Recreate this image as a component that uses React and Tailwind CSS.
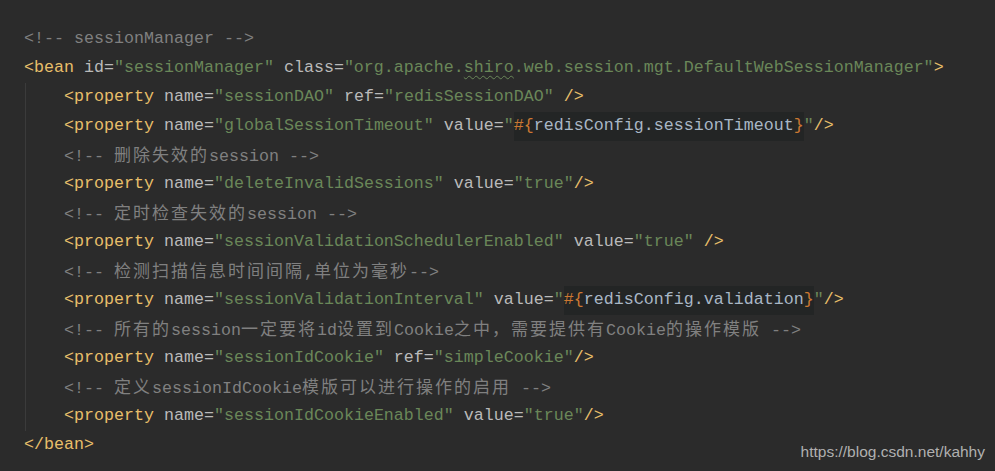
const C = {
  t: 'text-[#e8bf6a]',
  a: 'text-[#bababa]',
  v: 'text-[#6a8759]',
  c: 'text-[#808080]',
  o: 'text-[#cc7832]',
  i: 'text-[#a9b7c6]',
};

const prop = (name, attr, value) => [
  ['t', '<property'],
  ['a', ' name='],
  ['v', `"${name}"`],
  ['a', ` ${attr}=`],
  ['v', `"${value}"`],
];

const lines = [
  { lvl: 0, tk: [['c', '<!-- sessionManager -->']] },
  {
    lvl: 0,
    tk: [
      ['t', '<bean'],
      ['a', ' id='],
      ['v', '"sessionManager"'],
      ['a', ' class='],
      ['v', '"org.apache.'],
      ['u', 'shiro'],
      ['v', '.web.session.mgt.DefaultWebSessionManager"'],
      ['t', '>'],
    ],
  },
  { lvl: 1, tk: [...prop('sessionDAO', 'ref', 'redisSessionDAO'), ['t', ' />']] },
  {
    lvl: 1,
    tk: [
      ['t', '<property'],
      ['a', ' name='],
      ['v', '"globalSessionTimeout"'],
      ['a', ' value='],
      ['v', '"'],
      ['x', 'redisConfig.sessionTimeout'],
      ['v', '"'],
      ['t', '/>'],
    ],
  },
  { lvl: 1, tk: [['c', '<!-- 删除失效的session -->']] },
  { lvl: 1, tk: [...prop('deleteInvalidSessions', 'value', 'true'), ['t', '/>']] },
  { lvl: 1, tk: [['c', '<!-- 定时检查失效的session -->']] },
  { lvl: 1, tk: [...prop('sessionValidationSchedulerEnabled', 'value', 'true'), ['t', ' />']] },
  { lvl: 1, tk: [['c', '<!-- 检测扫描信息时间间隔,单位为毫秒-->']] },
  {
    lvl: 1,
    tk: [
      ['t', '<property'],
      ['a', ' name='],
      ['v', '"sessionValidationInterval"'],
      ['a', ' value='],
      ['v', '"'],
      ['x', 'redisConfig.validation'],
      ['v', '"'],
      ['t', '/>'],
    ],
  },
  { lvl: 1, tk: [['c', '<!-- 所有的session一定要将id设置到Cookie之中，需要提供有Cookie的操作模版 -->']] },
  { lvl: 1, tk: [...prop('sessionIdCookie', 'ref', 'simpleCookie'), ['t', '/>']] },
  { lvl: 1, tk: [['c', '<!-- 定义sessionIdCookie模版可以进行操作的启用 -->']] },
  { lvl: 1, tk: [...prop('sessionIdCookieEnabled', 'value', 'true'), ['t', '/>']] },
  { lvl: 0, tk: [['t', '</bean>']] },
];

// split CJK runs so they get their own (wider) metrics
function Text({ text }) {
  const parts = text.split(/([\u3000-\u9fff\uff00-\uffef]+)/);
  return parts.map((p, i) =>
    i % 2 === 1 ? (
      <span key={i} className="text-[17px] tracking-[2px]" style={{ fontFamily: '"Noto Sans CJK SC", sans-serif' }}>
        {p}
      </span>
    ) : (
      <span key={i}>{p}</span>
    )
  );
}

function Token({ type, text }) {
  if (type === 'x') {
    return (
      <span className="self-stretch flex items-center bg-[#232525]">
        <span className={C.o}>#{'{'}</span>
        <span className={C.i}>{text}</span>
        <span className={C.o}>{'}'}</span>
      </span>
    );
  }
  if (type === 'u') {
    return (
      <span className="text-[#6a8759] underline decoration-wavy decoration-[#6a8759] underline-offset-[3px] decoration-1">
        {text}
      </span>
    );
  }
  return (
    <span className={C[type]}>
      <Text text={text} />
    </span>
  );
}

function Line({ tk }) {
  return (
    <div className="flex h-[29px] items-center whitespace-pre">
      {tk.map(([type, text], i) => (
        <Token key={i} type={type} text={text} />
      ))}
    </div>
  );
}

export default function App() {
  const top = lines.slice(0, 2);
  const inner = lines.slice(2, 14);
  const end = lines.slice(14);

  return (
    <div
      className="relative h-[471px] w-full overflow-hidden bg-[#2b2b2b] pl-[24px] pt-[25px] text-[16.67px] leading-none"
      style={{ fontFamily: '"Liberation Mono", "Noto Sans CJK SC", monospace' }}
    >
      {top.map((l, i) => (
        <Line key={i} tk={l.tk} />
      ))}
      <div className="ml-[1px] border-l border-[#3b3b3b] pl-[38px]">
        {inner.map((l, i) => (
          <Line key={i} tk={l.tk} />
        ))}
      </div>
      {end.map((l, i) => (
        <Line key={i} tk={l.tk} />
      ))}

      <div
        className="absolute right-[10px] bottom-[12px] text-[15.5px] text-[#d4d4d4]/80"
        style={{ fontFamily: '"Liberation Sans", Arial, sans-serif' }}
      >
        https://blog.csdn.net/kahhy
      </div>
    </div>
  );
}
